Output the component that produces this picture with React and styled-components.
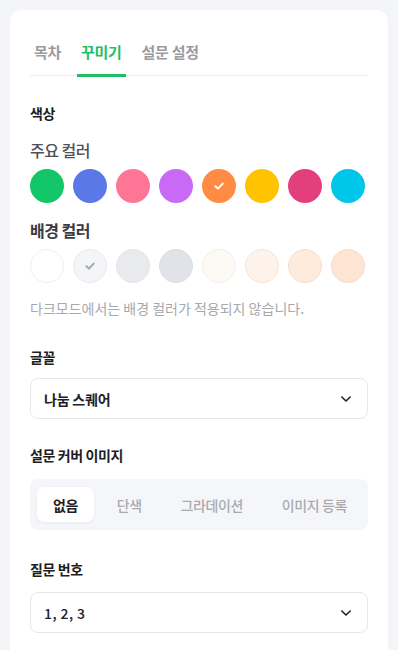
import React from "react";
import styled, { createGlobalStyle } from "styled-components";

const Global = createGlobalStyle`
  html, body { margin: 0; padding: 0; background: #f4f5f8; }
  body { font-family: "Noto Sans CJK KR", "Noto Sans", sans-serif; -webkit-font-smoothing: antialiased; }
  * { box-sizing: border-box; }
`;

const Page = styled.div`
  padding: 10px 10px 0;
  height: 650px;
  overflow: hidden;
`;

const Card = styled.div`
  background: #fff;
  border-radius: 12px;
  padding: 28px 20px 40px;
  min-height: 700px;
`;

const Tabs = styled.div`
  display: flex;
  gap: 12px;
  border-bottom: 1px solid #ececef;
`;

const Tab = styled.div`
  padding: 0 4px 8px;
  font-size: 15px;
  font-weight: 700;
  letter-spacing: -0.3px;
  line-height: 28px;
  color: ${(p) => (p.$active ? "#1fbf66" : "#9a9a9f")};
  border-bottom: 3px solid ${(p) => (p.$active ? "#1fbf66" : "transparent")};
  margin-bottom: -2px;
`;

const Section = styled.div`
  margin-top: ${(p) => p.$mt || 0}px;
`;

const Heading = styled.div`
  font-size: 14px;
  font-weight: 700;
  color: #1e1e22;
  letter-spacing: -0.4px;
  line-height: 20px;
`;

const SubLabel = styled.div`
  font-size: 16px;
  font-weight: ${(p) => (p.$strong ? 600 : 500)};
  color: ${(p) => (p.$strong ? "#3a3a3f" : "#505056")};
  letter-spacing: -0.5px;
  line-height: 22px;
  margin-top: ${(p) => p.$mt || 0}px;
`;

const Swatches = styled.div`
  display: flex;
  gap: 9px;
  margin-top: 8px;
`;

const Swatch = styled.div`
  width: 34px;
  height: 34px;
  border-radius: 50%;
  background: ${(p) => p.$c};
  border: ${(p) => (p.$border ? `1px solid ${p.$border}` : "none")};
  display: flex;
  align-items: center;
  justify-content: center;
  flex-shrink: 0;
`;

const Note = styled.div`
  margin-top: 15px;
  font-size: 14px;
  color: #a7a7ad;
  letter-spacing: 0;
  line-height: 20px;
`;

const Select = styled.div`
  margin-top: ${(p) => p.$mt || 12}px;
  height: 41px;
  border: 1px solid #e6e7eb;
  border-radius: 8px;
  display: flex;
  align-items: center;
  justify-content: space-between;
  padding: 0 14px 0 13px;
  font-size: 14px;
  font-weight: ${(p) => p.$weight || 700};
  color: #222226;
  letter-spacing: ${(p) => p.$ls || "-0.2px"};
`;

const Segmented = styled.div`
  margin-top: 14px;
  background: #f5f6f9;
  border-radius: 8px;
  padding: 8px 5px 8px 7px;
  display: flex;
  justify-content: space-between;
`;

const Seg = styled.div`
  height: 35px;
  padding: 0 16px;
  border-radius: 7px;
  display: flex;
  align-items: center;
  font-size: 14px;
  letter-spacing: -0.4px;
  font-weight: ${(p) => (p.$active ? 700 : 500)};
  color: ${(p) => (p.$active ? "#222226" : "#a9aab0")};
  background: ${(p) => (p.$active ? "#fff" : "transparent")};
  box-shadow: ${(p) => (p.$active ? "0 1px 3px rgba(0,0,0,0.06)" : "none")};
`;

const Check = ({ color }) => (
  <svg width="14" height="14" viewBox="0 0 14 14" fill="none">
    <path d="M3.3 7.2 L6 9.6 L10.7 4.6" stroke={color} strokeWidth="2" strokeLinecap="round" strokeLinejoin="round" />
  </svg>
);

const Chevron = () => (
  <svg width="14" height="14" viewBox="0 0 14 14" fill="none">
    <path d="M2.8 5 L7 9 L11.2 5" stroke="#222" strokeWidth="1.6" strokeLinecap="round" strokeLinejoin="round" />
  </svg>
);

const primary = ["#13c768", "#5a78e6", "#fe7596", "#c86af6", "#ff8c42", "#ffc300", "#e33f7d", "#00c6ea"];
const bgs = [
  { c: "#ffffff", b: "#f0f0f2" },
  { c: "#f4f5f9", b: "#e9eaef", check: true },
  { c: "#e9eaee", b: "#e4e5ea" },
  { c: "#e2e3e8", b: "#dcdde2" },
  { c: "#fdf9f5", b: "#f5eee8" },
  { c: "#fdf3eb", b: "#f3e6dc" },
  { c: "#feebdc", b: "#f5e0cf" },
  { c: "#fee5d3", b: "#f6dcc7" },
];

export default function App() {
  return (
    <>
      <Global />
      <Page>
        <Card>
          <Tabs>
            <Tab>목차</Tab>
            <Tab $active>꾸미기</Tab>
            <Tab>설문 설정</Tab>
          </Tabs>

          <Section $mt={27}>
            <Heading>색상</Heading>
            <SubLabel $mt={16}>주요 컬러</SubLabel>
            <Swatches>
              {primary.map((c, i) => (
                <Swatch key={c} $c={c}>{i === 4 && <Check color="#fff" />}</Swatch>
              ))}
            </Swatches>
            <SubLabel $strong $mt={16}>배경 컬러</SubLabel>
            <Swatches>
              {bgs.map((s) => (
                <Swatch key={s.c} $c={s.c} $border={s.b}>{s.check && <Check color="#a5a7ad" />}</Swatch>
              ))}
            </Swatches>
            <Note>다크모드에서는 배경 컬러가 적용되지 않습니다.</Note>
          </Section>

          <Section $mt={29}>
            <Heading>글꼴</Heading>
            <Select $mt={11}>
              나눔 스퀘어
              <Chevron />
            </Select>
          </Section>

          <Section $mt={26}>
            <Heading>설문 커버 이미지</Heading>
            <Segmented>
              <Seg $active>없음</Seg>
              <Seg>단색</Seg>
              <Seg>그라데이션</Seg>
              <Seg>이미지 등록</Seg>
            </Segmented>
          </Section>

          <Section $mt={29}>
            <Heading>질문 번호</Heading>
            <Select $weight={500} $mt={13} $ls="0.4px">
              1, 2, 3
              <Chevron />
            </Select>
          </Section>
        </Card>
      </Page>
    </>
  );
}
